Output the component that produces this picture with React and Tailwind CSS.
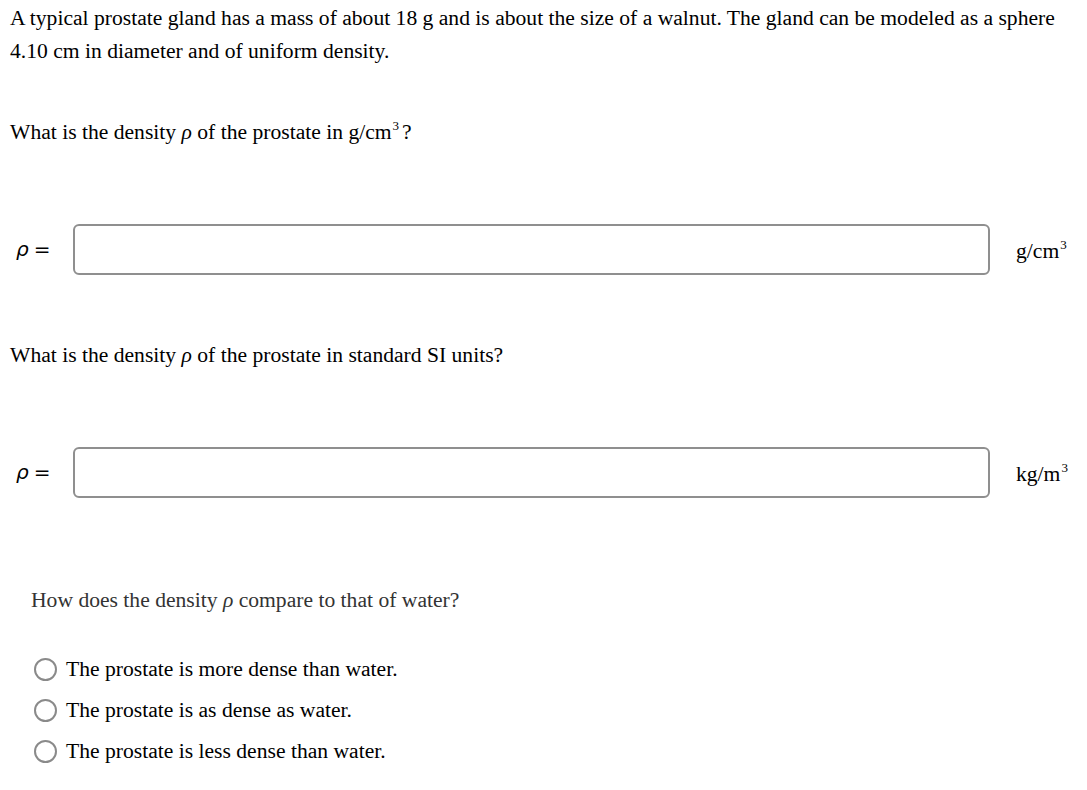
function Sup({ children }) {
  return <span className="relative top-[-9px] text-[13px] leading-none ml-[1px]">{children}</span>
}

export default function App() {
  const serif = { fontFamily: '"Liberation Serif", "Times New Roman", serif' }
  return (
    <div className="bg-white text-black text-[21.6px] leading-[33px] w-[1087px] h-[790px]" style={serif}>
      <div className="px-[10px] pt-[2px]">
        <p>A typical prostate gland has a mass of about 18 g and is about the size of a walnut. The gland can be modeled as a sphere 4.10 cm in diameter and of uniform density.</p>
        <p className="mt-[48px]">What is the density <i>ρ</i> of the prostate in g/cm<Sup>3</Sup><span className="ml-[3px]">?</span></p>
      </div>
      <AnswerRow unit={<>g/cm<Sup>3</Sup></>} className="mt-[75px]" />
      <p className="px-[10px] mt-[64px]">What is the density <i>ρ</i> of the prostate in standard SI units?</p>
      <AnswerRow unit={<>kg/m<Sup>3</Sup></>} className="mt-[75px]" />
      <div className="pl-[31px] mt-[86px]">
        <p className="text-[#333]">How does the density <i>ρ</i> compare to that of water?</p>
        <div className="mt-[36px] flex flex-col gap-[8px]">
          {['The prostate is more dense than water.', 'The prostate is as dense as water.', 'The prostate is less dense than water.'].map(t => (
            <label key={t} className="flex items-center gap-[9px] h-[33px]">
              <span className="ml-[3px] w-[23px] h-[23px] rounded-full border-2 border-[#8a8a8a] bg-white shrink-0"></span>
              <span>{t}</span>
            </label>
          ))}
        </div>
      </div>
    </div>
  )
}

function AnswerRow({ unit, className }) {
  return (
    <div className={`flex items-center h-[51px] ${className}`}>
      <div className="w-[73px] pl-[16px] text-[20px] flex items-center" style={{ fontFamily: '"DejaVu Sans", sans-serif' }}>
        <i>ρ</i>
        <span className="ml-[5px]">=</span>
      </div>
      <div className="w-[917px] h-[51px] border-2 border-[#8f8f8f] rounded-[6px]"></div>
      <div className="pl-[26px] pt-[4px]">{unit}</div>
    </div>
  )
}
